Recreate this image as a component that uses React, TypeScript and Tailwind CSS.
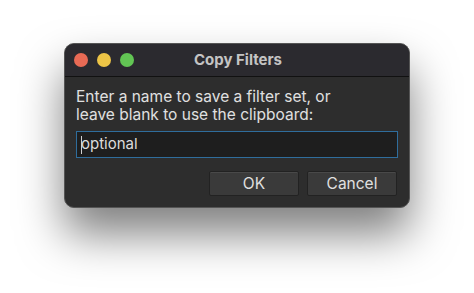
import React from 'react';

const App: React.FC = () => {
  return (
    <div className="w-[474px] h-[293px] bg-white pt-[43px] pl-[64px]" style={{ fontFamily: 'Inter, "Noto Sans", sans-serif' }}>
      {/* Dialog window */}
      <div className="w-[346px] h-[165px] rounded-[10px] bg-[#2d2d2d] border border-[#555] shadow-[0_26px_45px_rgba(0,0,0,0.5)] flex flex-col overflow-hidden">
        {/* Title bar */}
        <div className="h-[33px] bg-[#2b2a2f] border-b border-[#111] flex items-center relative shrink-0">
          <div className="flex items-center gap-[9px] pl-[9px]">
            <span className="w-[14px] h-[14px] rounded-full bg-[#e86a55]" />
            <span className="w-[14px] h-[14px] rounded-full bg-[#edc446]" />
            <span className="w-[14px] h-[14px] rounded-full bg-[#62c554]" />
          </div>
          <div className="absolute inset-0 flex items-center justify-center text-[15px] font-bold text-[#c4c4c4] pl-[2px]">
            Copy Filters
          </div>
        </div>
        {/* Body */}
        <div className="flex flex-col px-[11px] pt-[11px]">
          <p className="text-[15.5px] leading-[18px] text-[#e0e0e0]">
            Enter a name to save a filter set, or
            <br />
            leave blank to use the clipboard:
          </p>
          <div className="mt-[7px] h-[27px] w-[322px] border border-[#2f6d9c] bg-[#1e1e1e] flex items-center pl-[4px] text-[15px] text-[#dcdcdc]">
            <span className="w-px h-[18px] bg-[#d0d0d0]" />
            <span className="-ml-px">optional</span>
          </div>
          <div className="flex justify-end gap-[8px] mt-[13px] pr-px">
            <button className="w-[90px] h-[25px] bg-[#3a3a3a] border border-[#222] rounded-[2px] text-[15.5px] text-[#e0e0e0] shadow-[inset_0_1px_0_rgba(255,255,255,0.08)]">
              OK
            </button>
            <button className="w-[90px] h-[25px] bg-[#3a3a3a] border border-[#222] rounded-[2px] text-[15.5px] text-[#e0e0e0] shadow-[inset_0_1px_0_rgba(255,255,255,0.08)]">
              Cancel
            </button>
          </div>
        </div>
      </div>
    </div>
  );
};

export default App;
